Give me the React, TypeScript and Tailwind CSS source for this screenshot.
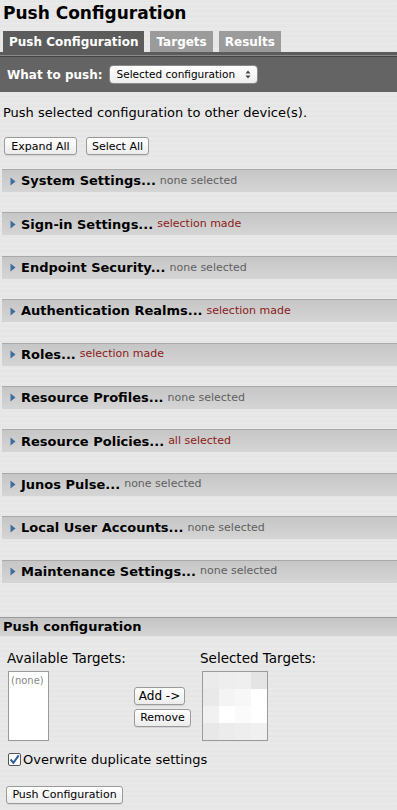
import React from "react";

type Section = { name: string; status: string; made: boolean };

const sections: Section[] = [
  { name: "System Settings...", status: "none selected", made: false },
  { name: "Sign-in Settings...", status: "selection made", made: true },
  { name: "Endpoint Security...", status: "none selected", made: false },
  { name: "Authentication Realms...", status: "selection made", made: true },
  { name: "Roles...", status: "selection made", made: true },
  { name: "Resource Profiles...", status: "none selected", made: false },
  { name: "Resource Policies...", status: "all selected", made: true },
  { name: "Junos Pulse...", status: "none selected", made: false },
  { name: "Local User Accounts...", status: "none selected", made: false },
  { name: "Maintenance Settings...", status: "none selected", made: false },
];

// mosaic of the blurred "Selected Targets" list
const mosaic = [
  "#ebebeb", "#eeeeee", "#efefef", "#e4e4e4",
  "#e9e9e9", "#f4f4f4", "#f7f7f7", "#ffffff",
  "#f1f1f1", "#ffffff", "#fbfbfb", "#ffffff",
  "#e8e8e8", "#ececec", "#eeeeee", "#f0f0f0",
];

function Btn({ children, className = "" }: { children: React.ReactNode; className?: string }) {
  return (
    <button
      className={
        "flex h-[18px] items-center justify-center rounded-[3px] border border-[#9a9a9a] bg-gradient-to-b from-white to-[#ececec] text-[11px] leading-none text-black shadow-[0_1px_0_rgba(0,0,0,0.08)] " +
        className
      }
    >
      {children}
    </button>
  );
}

function SectionRow({ s }: { s: Section }) {
  return (
    <div className="ml-[2px] flex h-[23px] items-center border-t border-[#a9a9a9] bg-gradient-to-b from-[#c6c6c6] to-[#d5d5d5] pl-[8px]">
      <svg width="6" height="9" viewBox="0 0 6 9" className="mr-[5px]">
        <path d="M0.5 0.5 L5.5 4.5 L0.5 8.5 Z" fill="#3f6d9c" />
      </svg>
      <span className="text-[13px] font-bold text-black">{s.name}</span>
      <span className={"ml-[4px] text-[11px] " + (s.made ? "text-[#8b1a1a]" : "text-[#5f5f5f]")}>
        {s.status}
      </span>
    </div>
  );
}

export default function App() {
  return (
    <div
      className="h-[810px] w-[397px] overflow-hidden bg-[#e7e7e7] bg-[repeating-linear-gradient(180deg,#e9e9e9_0px,#e3e3e3_2px,#ececec_3px,#e5e5e5_5px)] text-black"
      style={{ fontFamily: '"DejaVu Sans", Verdana, sans-serif' }}
    >
      <h1 className="pl-[3px] pt-[1px] text-[17px] font-bold leading-[24px]">Push Configuration</h1>

      {/* Tabs */}
      <div className="mt-[6px] flex items-end gap-[6px] pl-[3px]">
        <div className="flex h-[21px] items-center bg-[#5c5c5c] px-[6px] text-[12px] font-bold text-white">
          Push Configuration
        </div>
        <div className="flex h-[21px] items-center bg-[#9b9b9b] px-[6px] text-[12px] font-bold text-white">
          Targets
        </div>
        <div className="flex h-[21px] items-center bg-[#9b9b9b] px-[6px] text-[12px] font-bold text-white">
          Results
        </div>
      </div>
      <div className="bg-[#5c5c5c] pt-[3px]">
        <div className="border-t border-[#8a8a8a]" />
        <div className="flex h-[36px] items-center gap-[6px] border-t border-[#444] bg-[#646464] pl-[7px]">
          <span className="text-[12px] font-bold text-white">What to push:</span>
          <div className="flex h-[19px] w-[149px] items-center justify-between rounded-[4px] border border-[#8a8a8a] bg-gradient-to-b from-white to-[#ededed] pl-[7px] pr-[6px] text-[10.5px] text-black">
            <span>Selected configuration</span>
            <svg width="6" height="9" viewBox="0 0 6 9">
              <path d="M3 0.5 L5.5 3.5 H0.5 Z M3 8.5 L5.5 5.5 H0.5 Z" fill="#444" />
            </svg>
          </div>
        </div>
      </div>

      <p className="pl-[3px] pt-[13px] text-[13px] leading-[16px]">Push selected configuration to other device(s).</p>

      <div className="flex gap-[9px] pl-[4px] pt-[16px]">
        <Btn className="w-[73px]">Expand All</Btn>
        <Btn className="w-[63px]">Select All</Btn>
      </div>

      <div className="mt-[14px] flex flex-col gap-[20.4px]">
        {sections.map((s) => (
          <SectionRow key={s.name} s={s} />
        ))}
      </div>

      {/* Push configuration */}
      <div className="mt-[34px] flex h-[19px] items-center border-t border-[#9a9a9a] bg-gradient-to-b from-[#c4c4c4] to-[#d4d4d4] pl-[3px] text-[13px] font-bold">
        Push configuration
      </div>

      <div className="flex pl-[7px] pt-[14px]">
        <div className="flex w-[127px] flex-col">
          <span className="text-[13.5px] leading-[16px]">Available Targets:</span>
          <div className="ml-[1px] mt-[5px] h-[70px] w-[41px] border border-[#9a9a9a] bg-white pl-[2px] pt-[1px] text-[10px] text-[#888]">
            (none)
          </div>
        </div>
        <div className="mt-[37px] flex w-[66px] flex-col items-start gap-[4px]">
          <Btn className="w-[51px] text-[12px]">Add -&gt;</Btn>
          <Btn className="w-[57px]">Remove</Btn>
        </div>
        <div className="flex flex-col">
          <span className="text-[13.5px] leading-[16px]">Selected Targets:</span>
          <div className="ml-[2px] mt-[5px] grid h-[70px] w-[66px] grid-cols-4 grid-rows-4 border border-[#9a9a9a] bg-white">
            {mosaic.map((c, i) => (
              <div key={i} style={{ backgroundColor: c }} />
            ))}
          </div>
        </div>
      </div>

      <label className="mt-[11px] flex items-center pl-[8px] text-[13px] leading-[16px]">
        <span className="mr-[2px] flex h-[13px] w-[13px] items-center justify-center rounded-[2px] border border-[#555] bg-white">
          <svg width="11" height="11" viewBox="0 0 10 10">
            <path d="M1.5 5 L4 8 L8.8 1.2" fill="none" stroke="#2d5f9a" strokeWidth="1.8" />
          </svg>
        </span>
        Overwrite duplicate settings
      </label>

      <div className="pl-[6px] pt-[18px]">
        <Btn className="w-[117px]">Push Configuration</Btn>
      </div>
    </div>
  );
}
